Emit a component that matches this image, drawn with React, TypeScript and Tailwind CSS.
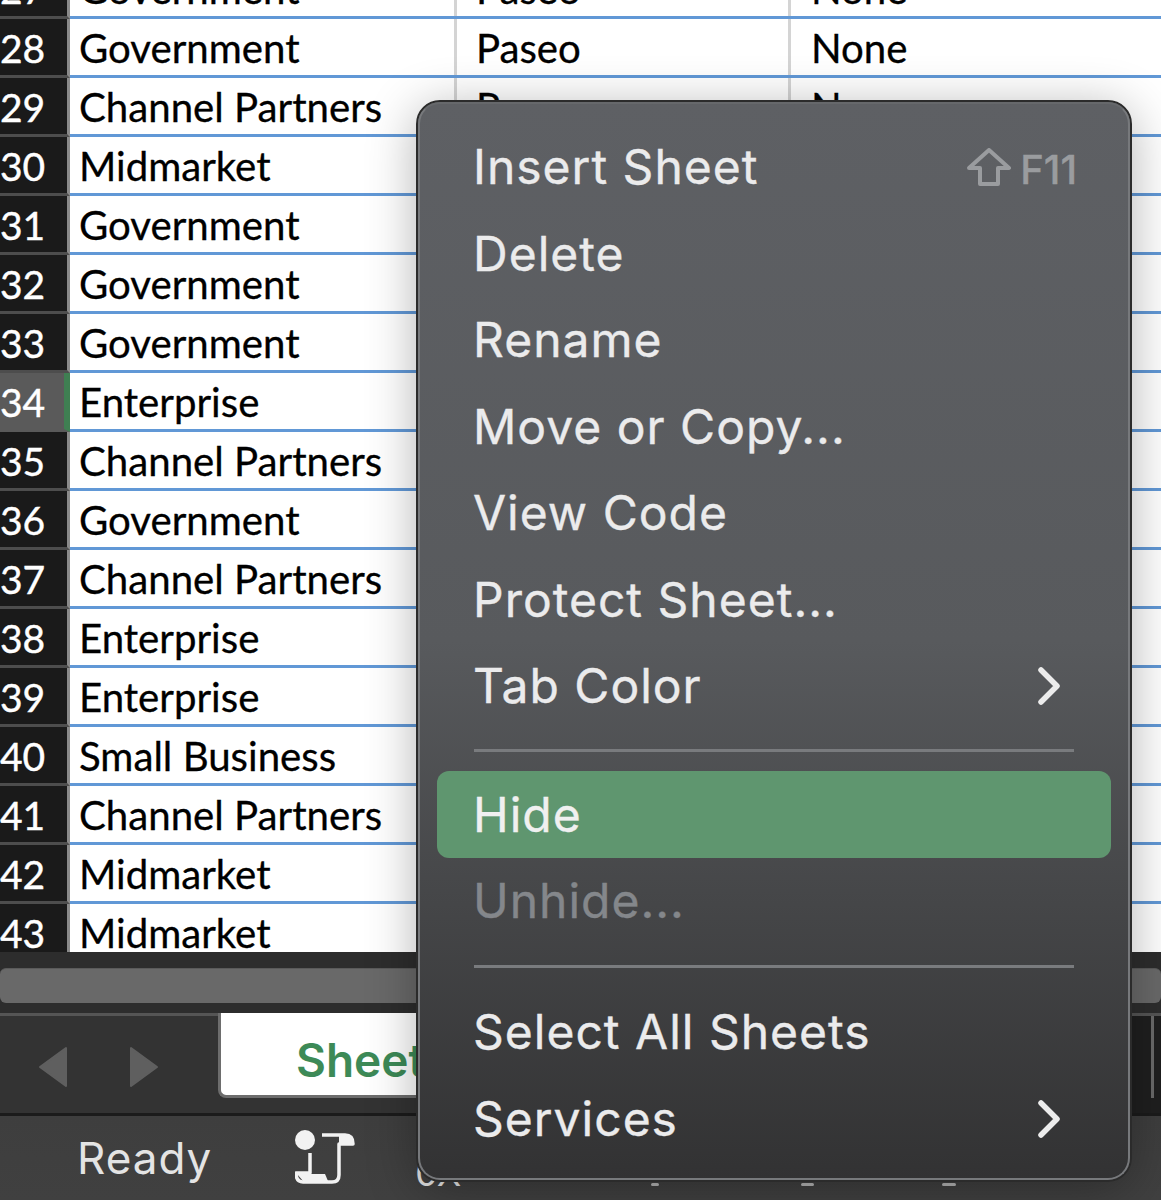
import React from "react";

const rows: [number, string, string?, string?][] = [
  [27, "Government", "Paseo", "None"],
  [28, "Government", "Paseo", "None"],
  [29, "Channel Partners", "Paseo", "None"],
  [30, "Midmarket"],
  [31, "Government"],
  [32, "Government"],
  [33, "Government"],
  [34, "Enterprise"],
  [35, "Channel Partners"],
  [36, "Government"],
  [37, "Channel Partners"],
  [38, "Enterprise"],
  [39, "Enterprise"],
  [40, "Small Business"],
  [41, "Channel Partners"],
  [42, "Midmarket"],
  [43, "Midmarket"],
];

function Row({ n, a, b, c }: { n: number; a: string; b?: string; c?: string }) {
  const active = n === 34;
  return (
    <div className="flex h-[59px] shrink-0">
      <div
        className={`w-[70px] shrink-0 flex items-center pt-[3px] border-b-[3px] ${
          active ? "bg-[#5a5a5a] border-b-[#5a5a5a] border-r-[6px] border-r-[#3f7f52]" : "bg-[#1a1a1a] border-b-[#4d4d4d] border-r-[3px] border-r-[#8a8a8a]"
        }`}
      >
        <span className="text-[39px] leading-none text-white font-['Lato',sans-serif] [-webkit-text-stroke:0.4px_white]">{n}</span>
      </div>
      <div className="flex-1 flex bg-white border-b-[3px] border-b-[#6198d6] text-black text-[40.2px] leading-none font-['Lato',sans-serif] [-webkit-text-stroke:0.3px_black]">
        <div className="w-[387px] shrink-0 flex items-center pl-[9px] pt-[3px] border-r-[3px] border-r-[#d4d4d4]">{a}</div>
        <div className="w-[334px] shrink-0 flex items-center pl-[19px] pt-[3px] border-r-[3px] border-r-[#d4d4d4]">{b}</div>
        <div className="flex-1 flex items-center pl-[20px] pt-[3px]">{c}</div>
      </div>
    </div>
  );
}

function Item({ label, right, disabled, active }: { label: string; right?: React.ReactNode; disabled?: boolean; active?: boolean }) {
  return (
    <div
      className={`h-[86.5px] shrink-0 mx-[17px] pl-[36px] pr-[32px] flex items-center justify-between rounded-[12px] text-[48px] tracking-[1px] leading-none [-webkit-text-stroke:0.35px_currentColor] ${
        active ? "bg-[#5f966f] text-[#f0f0f0]" : disabled ? "text-[#84878b]" : "text-[#ebebec]"
      }`}
    >
      <span className={active ? "pt-[2px]" : ""}>{label}</span>
      {right}
    </div>
  );
}

const Chevron = () => (
  <svg width="24" height="38" viewBox="0 0 24 38" fill="none" className="mr-[18px]">
    <path d="M4 3 L20 19 L4 35" stroke="#ececec" strokeWidth="5.5" strokeLinecap="round" strokeLinejoin="round" />
  </svg>
);

const Shortcut = () => (
  <span className="flex items-center text-[#9a9c9f] text-[40px] tracking-normal font-medium leading-none gap-[9px] mr-[2px]">
    <svg width="44" height="38" viewBox="0 0 44 38" fill="none">
      <path d="M22 2 L42 20 H31 V36 H13 V20 H2 Z" stroke="#9a9c9f" strokeWidth="4" strokeLinejoin="round" />
    </svg>
    <span className="pt-[6px]">F11</span>
  </span>
);

const Sep = ({ h }: { h: string }) => (
  <div className={`${h} shrink-0 flex items-center px-[54px]`}>
    <div className="h-[3px] w-full bg-[#797b7e]" />
  </div>
);

export default function App() {
  return (
    <div className="relative w-[1161px] h-[1200px] overflow-hidden flex flex-col bg-[#3a3a3a] font-['Inter',sans-serif]">
      <div className="h-[952px] shrink-0 overflow-hidden">
        <div className="flex flex-col -mt-[40px]">
          {rows.map((r) => (
            <Row key={r[0]} n={r[0]} a={r[1]} b={r[2]} c={r[3]} />
          ))}
        </div>
      </div>

      <div className="h-[61px] shrink-0 bg-[#2d2d2d] pt-[16px]">
        <div className="h-[35px] bg-[#696969] rounded-[6px] border-t border-t-[#5a5a5a]" />
      </div>

      <div className="h-[103px] shrink-0 flex bg-[#333333] border-t-[3px] border-t-[#555555] border-b-[3px] border-b-[#1b1b1b]">
        <div className="w-[218px] shrink-0 flex items-center pl-[38px] gap-[61px] pt-[4px]">
          <svg width="30" height="42" viewBox="0 0 30 42">
            <path d="M28 2 V40 L2 21 Z" fill="#5f5f5f" stroke="#5f5f5f" strokeWidth="2" strokeLinejoin="round" />
          </svg>
          <svg width="30" height="42" viewBox="0 0 30 42">
            <path d="M2 2 V40 L28 21 Z" fill="#5f5f5f" stroke="#5f5f5f" strokeWidth="2" strokeLinejoin="round" />
          </svg>
        </div>
        <div className="w-[300px] h-[85px] -mt-[3px] shrink-0 bg-white rounded-bl-[8px] border-l-[3px] border-b-[3px] border-[#6d6d6d] pl-[75px] pt-[12px] flex items-center text-[#3d8a57] text-[46px] font-semibold leading-none">
          Sheet1
        </div>
        <div className="flex-1 bg-[#1f1f1f] flex justify-end pr-[7px]">
          <div className="w-[3px] h-[82px] bg-[#6a6a6a]" />
        </div>
      </div>

      <div className="flex-1 bg-gradient-to-b from-[#3e3e3e] to-[#404040] flex items-center pl-[77px]">
        <span className="text-[#e4e4e4] text-[44px] leading-none tracking-[1px]">Ready</span>
        <svg width="60" height="58" viewBox="0 0 60 58" fill="none" className="ml-[83px]">
          <circle cx="10" cy="11" r="10" fill="#f2f2f2" />
          <path d="M27 6 H50 Q58 6 58 15 H44 V46 Q44 53 37 53 H8 Q1 53 1 44 H15 V24" stroke="#f2f2f2" strokeWidth="3.5" strokeLinejoin="round" />
          <path d="M44 7 H50 Q57 7 57 14 H44 Z" fill="#f2f2f2" />
          <path d="M2 45 H30 L33 52 H8 Z" fill="#f2f2f2" />
        </svg>
        <span className="ml-[60px] self-end pb-[9px] text-[36px] leading-none text-[#e4e4e4]">0X</span>
        <div className="ml-[190px] self-start mt-[67px] w-[8px] h-[3px] rounded-full bg-[#b5b5b5]" />
        <div className="ml-[142px] self-start mt-[67px] w-[13px] h-[3px] rounded-full bg-[#b5b5b5]" />
        <div className="ml-[128px] self-start mt-[67px] w-[14px] h-[3px] rounded-full bg-[#b5b5b5]" />
      </div>

      <div className="absolute left-[416px] top-[100px] w-[716px] h-[1082px] rounded-[24px] border-[2px] border-[#2b2b2b] shadow-[0_8px_50px_rgba(0,0,0,0.3)] bg-gradient-to-b from-[#5e6064] via-[#585a5d] to-[#323233]">
        <div className="h-full flex flex-col rounded-[22px] border-[2px] border-[#77797c] border-t-[#66686b] pt-[20px] text-[#ebebec]">
          <Item label="Insert Sheet" right={<Shortcut />} />
          <Item label="Delete" />
          <Item label="Rename" />
          <Item label="Move or Copy..." />
          <Item label="View Code" />
          <Item label="Protect Sheet..." />
          <Item label="Tab Color" right={<Chevron />} />
          <Sep h="h-[41.5px]" />
          <Item label="Hide" active />
          <Item label="Unhide..." disabled />
          <Sep h="h-[45px]" />
          <Item label="Select All Sheets" />
          <Item label="Services" right={<Chevron />} />
        </div>
      </div>
    </div>
  );
}
